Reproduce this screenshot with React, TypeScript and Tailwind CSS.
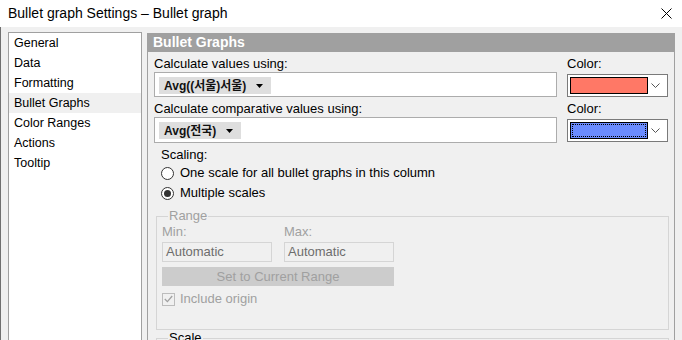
import React from 'react';

const NAV_ITEMS = ['General', 'Data', 'Formatting', 'Bullet Graphs', 'Color Ranges', 'Actions', 'Tooltip'];

const FONT = { fontFamily: '"Liberation Sans", "Noto Sans CJK KR", Arial, sans-serif' };

function CloseIcon() {
  return (
    <svg width="11" height="11" viewBox="0 0 11 11" fill="none" stroke="#000" strokeWidth="1">
      <path d="M0.5 0.5l10 10M10.5 0.5l-10 10" />
    </svg>
  );
}

function Caret() {
  return (
    <svg width="7" height="4" viewBox="0 0 7 4">
      <path d="M0 0h7L3.5 4z" fill="#000" />
    </svg>
  );
}

function Chevron() {
  return (
    <svg width="9" height="5" viewBox="0 0 9 5" fill="none" stroke="#555" strokeWidth="1">
      <path d="M0.5 0.5l4 4 4-4" />
    </svg>
  );
}

function FieldChip({ label }: { label: string }) {
  return (
    <div className="ml-[4px] mt-[4px] flex h-[17px] w-fit items-center gap-[10px] bg-[#dedede] pl-[5px] pr-[8px] text-[12px] font-bold text-[#111]">
      <span>{label}</span>
      <Caret />
    </div>
  );
}

function ColorPicker({ color, focused }: { color: string; focused?: boolean }) {
  return (
    <div className="mt-[2px] flex h-[23px] items-center border border-[#7a7a7a] bg-white pl-[2px] pr-[4px]">
      <div className="h-[17px] w-[78px] border border-black p-[1px]" style={{ backgroundColor: color }}>
        {focused && <div className="h-full w-full border border-dotted border-black" />}
      </div>
      <div className="flex flex-1 justify-center">
        <Chevron />
      </div>
    </div>
  );
}

function Radio({ checked, label }: { checked?: boolean; label: string }) {
  return (
    <div className="flex h-[20px] items-center gap-[6px]">
      <span className="flex h-[13px] w-[13px] items-center justify-center rounded-full border border-[#333] bg-white">
        {checked && <span className="h-[7px] w-[7px] rounded-full bg-[#333]" />}
      </span>
      <span>{label}</span>
    </div>
  );
}

export default function App() {
  return (
    <div className="h-[340px] w-[682px] overflow-hidden bg-[#f0f0f0] text-black" style={FONT}>
      {/* title bar */}
      <div className="flex h-[27px] items-center justify-between bg-white pl-[8px] pr-[10px]">
        <span className="text-[14px]">Bullet graph Settings – Bullet graph</span>
        <CloseIcon />
      </div>

      <div className="flex h-[313px] gap-[5px] border-l border-[#707070] pl-[7px] pt-[5px]">
        {/* nav list */}
        <div className="h-[320px] w-[134px] border border-[#a0a0a0] bg-white text-[12.5px]">
          {NAV_ITEMS.map((item) => (
            <div
              key={item}
              className={`flex h-[20px] items-center pl-[5px] ${item === 'Bullet Graphs' ? 'bg-[#f0f0f0]' : ''}`}
            >
              {item}
            </div>
          ))}
        </div>

        {/* settings panel */}
        <div className="mt-[1px] h-[320px] w-[528px] border-x border-[#a0a0a0] text-[13px]">
          <div className="-ml-px flex h-[19px] w-[527px] items-center bg-[#a0a0a0] pl-[6px] text-[14px] font-bold text-white">
            Bullet Graphs
          </div>

          <div className="pl-[6px] pr-[6px]">
            <div className="flex gap-[10px]">
              <div className="flex-1">
                <div className="flex h-[20px] items-end leading-[16px]">Calculate values using:</div>
                <div className="h-[25px] border border-[#acacac] bg-white">
                  <FieldChip label="Avg((서울)서울)" />
                </div>
              </div>
              <div className="w-[101px]">
                <div className="flex h-[20px] items-end pl-[-2px] leading-[16px]">Color:</div>
                <ColorPicker color="#ff7866" />
              </div>
            </div>

            <div className="flex gap-[10px]">
              <div className="flex-1">
                <div className="flex h-[20px] items-end leading-[16px]">Calculate comparative values using:</div>
                <div className="h-[26px] border border-[#acacac] bg-white">
                  <FieldChip label="Avg(전국)" />
                </div>
              </div>
              <div className="w-[101px]">
                <div className="flex h-[20px] items-end leading-[16px]">Color:</div>
                <ColorPicker color="#6b8cfe" focused />
              </div>
            </div>

            <div className="pl-[7px]">
              <div className="mt-[4px] leading-[16px]">Scaling:</div>
              <Radio label="One scale for all bullet graphs in this column" />
              <Radio label="Multiple scales" checked />
            </div>

            <fieldset className="-mr-px ml-[2px] mt-[5px] h-[122px] border border-[#d5d5d5] pl-[5px]">
              <legend className="ml-[6px] px-[1px] leading-[16px] text-[#a0a0a0]">Range</legend>
              <div className="flex gap-[12px] text-[#a0a0a0]">
                <div className="w-[110px]">
                  <div className="leading-[16px]">Min:</div>
                  <div className="mt-[2px] flex h-[20px] items-center border border-[#d5d5d5] pl-[3px] text-[#6d6d6d]">
                    Automatic
                  </div>
                </div>
                <div className="w-[110px]">
                  <div className="leading-[16px]">Max:</div>
                  <div className="mt-[2px] flex h-[20px] items-center border border-[#d5d5d5] pl-[3px] text-[#6d6d6d]">
                    Automatic
                  </div>
                </div>
              </div>
              <div className="mt-[5px] flex h-[19px] w-[232px] items-center justify-center bg-[#cccccc] text-[#a0a0a0]">
                Set to Current Range
              </div>
              <div className="mt-[4px] flex h-[18px] items-center gap-[5px] text-[#a0a0a0]">
                <span className="flex h-[13px] w-[13px] items-center justify-center border border-[#bcbcbc] bg-[#f0f0f0]">
                  <svg width="9" height="8" viewBox="0 0 9 8" fill="none" stroke="#a0a0a0" strokeWidth="1.3">
                    <path d="M0.8 4l2.6 2.6L8.2 1" />
                  </svg>
                </span>
                <span>Include origin</span>
              </div>
            </fieldset>

            <fieldset className="-mr-px ml-[2px] h-[40px] border border-[#d5d5d5] pl-[5px]">
              <legend className="ml-[6px] px-[1px] leading-[16px]">Scale</legend>
            </fieldset>
          </div>
        </div>
      </div>
    </div>
  );
}
